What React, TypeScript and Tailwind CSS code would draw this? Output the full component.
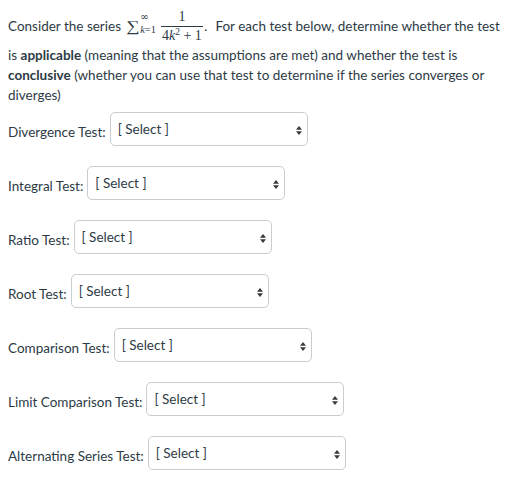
import React from "react";

const tests = [
  "Divergence Test:",
  "Integral Test:",
  "Ratio Test:",
  "Root Test:",
  "Comparison Test:",
  "Limit Comparison Test:",
  "Alternating Series Test:",
];

function Arrows() {
  return (
    <svg width="6" height="9" viewBox="0 0 6 9" className="block">
      <path d="M3 0 L6 3.8 L0 3.8 Z" fill="#3a3a3a" />
      <path d="M3 9 L6 5.2 L0 5.2 Z" fill="#3a3a3a" />
    </svg>
  );
}

function SelectBox() {
  return (
    <div className="w-[198px] h-[34px] border border-[#c7cdd1] rounded-[5px] bg-white flex items-start justify-between pl-[7px] pr-[5px] shrink-0">
      <span className="mt-[6px] leading-[20px] text-[13.5px] text-[#2d3b45]">[ Select ]</span>
      <span className="mt-[13px]">
        <Arrows />
      </span>
    </div>
  );
}

const serif = { fontFamily: "'Liberation Serif', 'DejaVu Serif', serif" };

export default function App() {
  return (
    <div
      className="w-[513px] h-[480px] bg-white text-[#2d3b45] px-[8px] pt-[8px]"
      style={{ fontFamily: "Lato, 'Noto Sans', sans-serif" }}
    >
      <p className="text-[13.5px] leading-[20px] m-0 whitespace-nowrap">
        <span>Consider the series </span>
        <span className="inline-block align-baseline ml-[2px]" style={serif}>
          <span className="text-[15px] inline-block scale-x-125 origin-left mr-[3px]">∑</span>
        </span>
        <span
          className="inline-flex flex-col align-[11px] text-[10.5px] leading-[13px] mr-[5px]"
          style={serif}
        >
          <span style={{ fontFamily: "'DejaVu Serif', serif" }} className="text-[10px]">∞</span>
          <span>
            <span className="italic">k</span>=1
          </span>
        </span>
        <span
          className="inline-flex flex-col items-center align-[10px] text-[14px]"
          style={serif}
        >
          <span className="leading-[18px] px-[2px]">1</span>
          <span className="leading-[16px] border-t border-[#2d3b45] px-[1px] pt-[1px]">
            4<span className="italic">k</span>
            <span className="text-[9.5px] relative -top-[5px]">2</span> + 1
          </span>
        </span>
        <span style={serif} className="text-[14px] ml-[1px]">.</span>
        <span className="ml-[8px]">For each test below, determine whether the test</span>
        <br />
        <span>is </span>
        <b>applicable</b>
        <span> (meaning that the assumptions are met) and whether the test is</span>
        <br />
        <b>conclusive</b>
        <span> (whether you can use that test to determine if the series converges or</span>
        <br />
        <span>diverges)</span>
      </p>
      <div className="flex flex-col gap-[20px] mt-[7px]">
        {tests.map((t) => (
          <div key={t} className="flex items-start gap-[4px]">
            <span className="mt-[10px] text-[13.5px] leading-[20px]">{t}</span>
            <SelectBox />
          </div>
        ))}
      </div>
    </div>
  );
}
